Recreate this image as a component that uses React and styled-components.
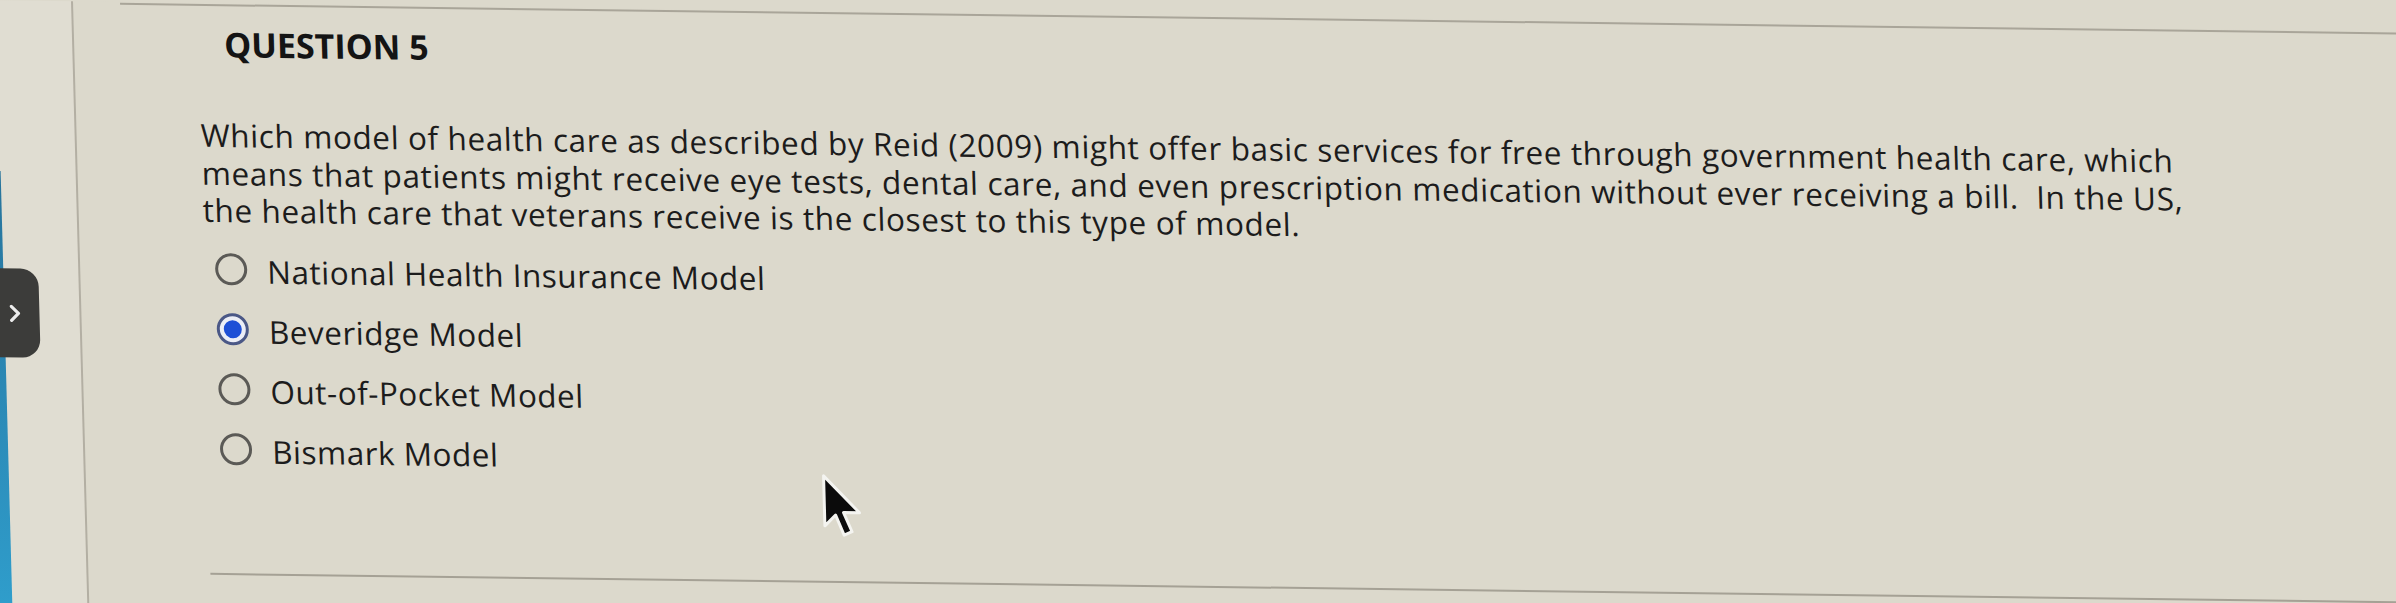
import React from 'react'
import styled, { createGlobalStyle } from 'styled-components'

const GlobalStyle = createGlobalStyle`
  html, body {
    margin: 0;
    padding: 0;
    background: #dcd9cc;
    overflow: hidden;
  }
  body {
    width: 2396px;
    height: 603px;
    font-family: "Open Sans", "Liberation Sans", sans-serif;
  }
`

const options = [
    { label: 'National Health Insurance Model', checked: false },
    { label: 'Beveridge Model', checked: true },
    { label: 'Out-of-Pocket Model', checked: false },
    { label: 'Bismark Model', checked: false },
]

const App = () => {
    return (
        <>
            <GlobalStyle />
            <Page>
                <Gutter>
                    <TealEdge />
                    <SideTab>
                        <svg width="12" height="18" viewBox="0 0 12 18">
                            <path d="M2 2 L9 9 L2 16" fill="none" stroke="#ececec" strokeWidth="3.2" strokeLinecap="round" strokeLinejoin="round" />
                        </svg>
                    </SideTab>
                </Gutter>
                <Main>
                    <QuestionBox>
                        <Header>QUESTION 5</Header>
                        <Body>
                            <Paragraph>
                                Which model of health care as described by Reid (2009) might offer basic services for free through government health care, which<br />
                                means that patients might receive eye tests, dental care, and even prescription medication without ever receiving a bill.{'\u00a0'} In the US,<br />
                                the health care that veterans receive is the closest to this type of model.
                            </Paragraph>
                            <OptionList>
                                {options.map((o) => (
                                    <Option key={o.label}>
                                        <Radio checked={o.checked} />
                                        <Label>{o.label}</Label>
                                    </Option>
                                ))}
                            </OptionList>
                        </Body>
                    </QuestionBox>
                </Main>
                <Cursor width="44" height="66" viewBox="0 0 44 66">
                    <path d="M3 3 L3 53 L14 42 L22 62 L30 58.5 L22 39.5 L38 39.5 Z" fill="#0b0b0b" stroke="#f4f4f0" strokeWidth="3" strokeLinejoin="round" />
                </Cursor>
            </Page>
        </>
    )
}

const Page = styled.div`
    position: relative;
    display: flex;
    width: 2460px;
    height: 603px;
    margin-left: -24px;
    background: #dcd9cc;
    transform-origin: 0 0;
    transform: matrix(1, 0.013, 0.027, 1, 0, 0);
`

const Gutter = styled.aside`
    position: relative;
    display: flex;
    flex-shrink: 0;
    width: 97px;
    box-sizing: border-box;
    background: #e0ddd2;
    border-right: 2px solid #b3afa3;
`

const TealEdge = styled.div`
    width: 20px;
    margin-top: 170px;
    background: linear-gradient(180deg, #27739b 0%, #2b88b5 50%, #2f9dcb 100%);
`

const SideTab = styled.div`
    position: absolute;
    left: 0;
    top: 268px;
    width: 55px;
    height: 89px;
    box-sizing: border-box;
    display: flex;
    align-items: center;
    justify-content: flex-end;
    padding-right: 18px;
    background: #3c3c3a;
    border-radius: 0 18px 18px 0;
`

const Main = styled.main`
    flex: 1;
    display: flex;
    flex-direction: column;
    padding-left: 47px;
`

const QuestionBox = styled.section`
    margin-top: 1px;
    border-top: 2px solid #a9a599;
`

const Header = styled.h2`
    margin: 18px 0 0 103px;
    font-size: 34px;
    line-height: 40px;
    font-weight: 700;
    color: #141414;
`

const Body = styled.div`
    margin: 52px 0 0 75px;
    padding-bottom: 94px;
    border-bottom: 2px solid #a5a195;
`

const Paragraph = styled.p`
    margin: 0;
    padding-left: 2px;
    font-size: 31.5px;
    line-height: 37.5px;
    letter-spacing: 0.6px;
    color: #1c1c1c;
    white-space: nowrap;
`

const OptionList = styled.div`
    margin-top: 10px;
    padding-left: 13px;
`

const Option = styled.label`
    display: flex;
    align-items: center;
    gap: 20px;
    height: 60px;
`

const Radio = styled.span`
    position: relative;
    flex-shrink: 0;
    width: 32px;
    height: 32px;
    box-sizing: border-box;
    border-radius: 50%;
    border: 3px solid ${(p) => (p.checked ? '#4b5886' : '#5b5a56')};
    background: ${(p) => (p.checked ? '#eceef6' : 'transparent')};
    &::after {
        content: '';
        display: ${(p) => (p.checked ? 'block' : 'none')};
        position: absolute;
        left: 4px;
        top: 4px;
        width: 18px;
        height: 18px;
        border-radius: 50%;
        background: #1e4fd6;
    }
`

const Label = styled.span`
    padding-top: 4px;
    font-size: 31.5px;
    letter-spacing: 0.5px;
    color: #1c1c1c;
`

const Cursor = styled.svg`
    position: absolute;
    left: 832px;
    top: 462px;
`

export default App
